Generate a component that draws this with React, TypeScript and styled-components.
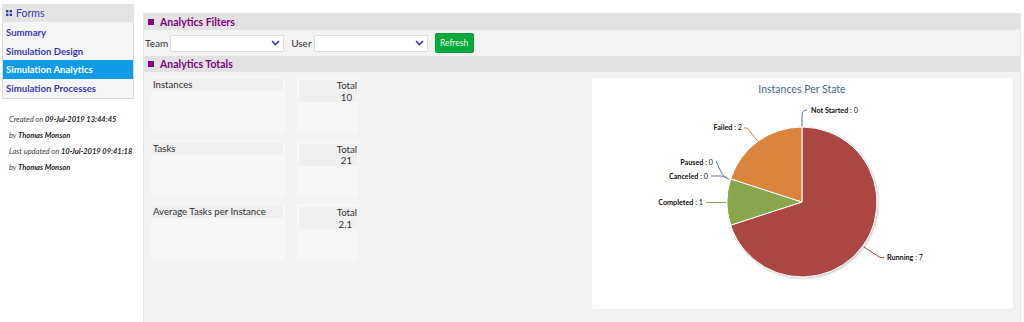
import styled, { createGlobalStyle } from "styled-components";

const GlobalStyle = createGlobalStyle`
  html, body {
    margin: 0;
    padding: 0;
    background: #ffffff;
    overflow: hidden;
  }
  body {
    font-family: Lato, "Open Sans", Arial, sans-serif;
    color: #333333;
  }
`;

const menuItems = [
  "Summary",
  "Simulation Design",
  "Simulation Analytics",
  "Simulation Processes",
];

const totals = [
  { label: "Instances", value: "10" },
  { label: "Tasks", value: "21" },
  { label: "Average Tasks per Instance", value: "2.1" },
];

function Chevron() {
  return (
    <svg width="9" height="6" viewBox="0 0 9 6">
      <polyline
        points="1,1 4.5,4.5 8,1"
        fill="none"
        stroke="#3a3ab5"
        strokeWidth="1.6"
      />
    </svg>
  );
}

function GridIcon() {
  return (
    <svg width="6" height="6" viewBox="0 0 6 6">
      <rect x="0" y="0" width="2.4" height="2.4" fill="#3a3ab5" />
      <rect x="3.6" y="0" width="2.4" height="2.4" fill="#3a3ab5" />
      <rect x="0" y="3.6" width="2.4" height="2.4" fill="#3a3ab5" />
      <rect x="3.6" y="3.6" width="2.4" height="2.4" fill="#3a3ab5" />
    </svg>
  );
}

// pie chart, drawn in page coordinates (viewBox matches panel position)
function PieChart() {
  return (
    <svg width="421" height="231" viewBox="592 79 421 231">
      <defs>
        <filter id="pieShadow" x="-10%" y="-10%" width="120%" height="120%">
          <feDropShadow dx="1" dy="1" stdDeviation="1" floodColor="#000" floodOpacity="0.25" />
        </filter>
      </defs>
      <text
        x="802"
        y="94"
        textAnchor="middle"
        fontSize="10.5"
        fill="#4a6788"
        fontFamily="Lato, 'Open Sans', sans-serif"
      >
        Instances Per State
      </text>

      {/* connectors */}
      <g fill="none" strokeWidth="1">
        <path d="M802 128 L802 116 Q802 111 807 111" stroke="#4572a7" />
        <path d="M757.5 142 L747 129 L744 129" stroke="#db843d" />
        <path d="M727 179 L722 175 L716 162" stroke="#3d96ae" />
        <path d="M729 180 L722 177 L711 177" stroke="#80699b" />
        <path d="M727 203.5 L706 203.5" stroke="#89a54e" />
        <path d="M864 248 L880 258.5 L884 258.5" stroke="#aa4643" />
      </g>

      <g filter="url(#pieShadow)" stroke="#ffffff" strokeWidth="1" strokeLinejoin="round">
        <path d="M802 203 L802 128 A75 75 0 1 1 730.67 226.18 Z" fill="#aa4643" />
        <path d="M802 203 L730.67 226.18 A75 75 0 0 1 730.67 179.82 Z" fill="#89a54e" />
        <path d="M802 203 L730.67 179.82 A75 75 0 0 1 802 128 Z" fill="#db843d" />
      </g>

      <g fontSize="7.2" fill="#111111" fontFamily="Lato, 'Open Sans', sans-serif">
        <text x="811" y="113.5">
          <tspan fontWeight="bold">Not Started</tspan> : 0
        </text>
        <text x="742" y="131" textAnchor="end">
          <tspan fontWeight="bold">Failed</tspan> : 2
        </text>
        <text x="713" y="166" textAnchor="end">
          <tspan fontWeight="bold">Paused</tspan> : 0
        </text>
        <text x="708" y="179.5" textAnchor="end">
          <tspan fontWeight="bold">Canceled</tspan> : 0
        </text>
        <text x="703" y="206" textAnchor="end">
          <tspan fontWeight="bold">Completed</tspan> : 1
        </text>
        <text x="887" y="261">
          <tspan fontWeight="bold">Running</tspan> : 7
        </text>
      </g>
    </svg>
  );
}

export default function App() {
  return (
    <>
      <GlobalStyle />
      <Page>
        <Sidebar>
          <FormsHeader>
            <GridIcon />
            Forms
          </FormsHeader>
          <Menu>
            {menuItems.map((item) => (
              <MenuItem key={item} $active={item === "Simulation Analytics"}>
                {item}
              </MenuItem>
            ))}
          </Menu>
          <Audit>
            <AuditLine>
              Created on <b>09-Jul-2019 13:44:45</b>
            </AuditLine>
            <AuditLine>
              by <b>Thomas Monson</b>
            </AuditLine>
            <AuditLine>
              Last updated on <b>10-Jul-2019 09:41:18</b>
            </AuditLine>
            <AuditLine>
              by <b>Thomas Monson</b>
            </AuditLine>
          </Audit>
        </Sidebar>

        <Main>
          <SectionHeader>
            <Bullet />
            Analytics Filters
          </SectionHeader>
          <FilterRow>
            <FilterLabel>Team</FilterLabel>
            <SelectBox>
              <Chevron />
            </SelectBox>
            <FilterLabel $spaced>User</FilterLabel>
            <SelectBox>
              <Chevron />
            </SelectBox>
            <RefreshButton>Refresh</RefreshButton>
          </FilterRow>
          <SectionHeader>
            <Bullet />
            Analytics Totals
          </SectionHeader>
          <Content>
            <Cards>
              {totals.map((t) => (
                <CardRow key={t.label}>
                  <LabelBox>
                    <LabelStrip>{t.label}</LabelStrip>
                  </LabelBox>
                  <TotalBox>
                    <TotalStrip>
                      <span>Total</span>
                      <TotalValue>{t.value}</TotalValue>
                    </TotalStrip>
                  </TotalBox>
                </CardRow>
              ))}
            </Cards>
            <ChartPanel>
              <PieChart />
            </ChartPanel>
          </Content>
        </Main>
      </Page>
    </>
  );
}

const Page = styled.div`
  display: flex;
  align-items: flex-start;
  gap: 9px;
  padding: 4px 3px 0 2px;
  height: 322px;
  box-sizing: border-box;
`;

// sidebar
const Sidebar = styled.div`
  width: 132px;
  flex-shrink: 0;
`;

const FormsHeader = styled.div`
  height: 18px;
  background: #e4e4e4;
  border-radius: 2px 2px 0 0;
  display: flex;
  align-items: center;
  gap: 4px;
  padding-left: 4px;
  font-size: 10.5px;
  color: #3a3ab5;
`;

const Menu = styled.div`
  border: 1px solid #d8d8d8;
  border-top: none;
  background: #f5f5f5;
  padding: 1px 0 0;
`;

const MenuItem = styled.div<{ $active?: boolean }>`
  height: 18.7px;
  display: flex;
  align-items: center;
  padding-left: 3px;
  font-size: 9.6px;
  font-weight: 700;
  color: ${(p) => (p.$active ? "#ffffff" : "#3a3ab5")};
  background: ${(p) => (p.$active ? "#0f9be6" : "transparent")};
`;

const Audit = styled.div`
  padding: 13px 0 0 7px;
`;

const AuditLine = styled.div`
  height: 16px;
  line-height: 16px;
  font-size: 7.5px;
  font-style: italic;
  white-space: nowrap;
  color: #444444;

  b {
    color: #222222;
  }
`;

// main panel
const Main = styled.div`
  flex: 1;
  margin-top: 9px;
  height: 320px;
  background: #f2f2f2;
  border: 1px solid #e6e6e6;
  border-bottom: none;
`;

const SectionHeader = styled.div`
  height: 16px;
  background: #e2e2e2;
  display: flex;
  align-items: center;
  gap: 6px;
  padding-left: 4px;
  font-size: 10.5px;
  font-weight: 700;
  color: #800080;
`;

const Bullet = styled.span`
  width: 6px;
  height: 6px;
  background: #800080;
`;

const FilterRow = styled.div`
  height: 26px;
  background: #f3f3f3;
  display: flex;
  align-items: center;
  padding-left: 1px;
`;

const FilterLabel = styled.span<{ $spaced?: boolean }>`
  font-size: 10px;
  color: #333333;
  margin: 0 2px 0 ${(p) => (p.$spaced ? "7px" : "0")};
`;

const SelectBox = styled.div`
  width: 114px;
  height: 17px;
  box-sizing: border-box;
  background: #ffffff;
  border: 1px solid #dcdcdc;
  border-radius: 2px;
  display: flex;
  align-items: center;
  justify-content: flex-end;
  padding-right: 3px;
`;

const RefreshButton = styled.button`
  margin-left: 7px;
  width: 39px;
  height: 20px;
  padding: 0;
  background: #0aab3c;
  border: 1px solid #0a9a36;
  border-radius: 2px;
  color: #e6f6e9;
  font-family: Lato, "Open Sans", sans-serif;
  font-size: 8.5px;
`;

const Content = styled.div`
  display: flex;
  justify-content: space-between;
  padding: 5px 7px 0 7px;
`;

const Cards = styled.div`
  display: flex;
  flex-direction: column;
  gap: 7.5px;
`;

const CardRow = styled.div`
  display: flex;
  gap: 12px;
`;

const LabelBox = styled.div`
  width: 134px;
  height: 56px;
  background: #f6f6f6;
  padding: 1px 2px 0 0;
  box-sizing: border-box;
`;

const LabelStrip = styled.div`
  height: 13px;
  line-height: 13px;
  background: #efefef;
  padding-left: 2px;
  font-size: 9.6px;
  color: #333333;
`;

const TotalBox = styled.div`
  width: 61px;
  height: 56px;
  background: #f6f6f6;
  padding: 3px 1px 0 2px;
  box-sizing: border-box;
`;

const TotalStrip = styled.div`
  height: 22px;
  background: #efefef;
  display: flex;
  flex-direction: column;
  align-items: flex-end;
  font-size: 9.6px;
  line-height: 11.5px;
  color: #333333;
`;

const TotalValue = styled.span`
  padding-right: 5px;
`;

const ChartPanel = styled.div`
  margin-top: 1px;
  width: 421px;
  height: 231px;
  background: #ffffff;
  border-radius: 3px;
  box-shadow: 0 0 2px rgba(0, 0, 0, 0.04);

  svg {
    display: block;
  }
`;
